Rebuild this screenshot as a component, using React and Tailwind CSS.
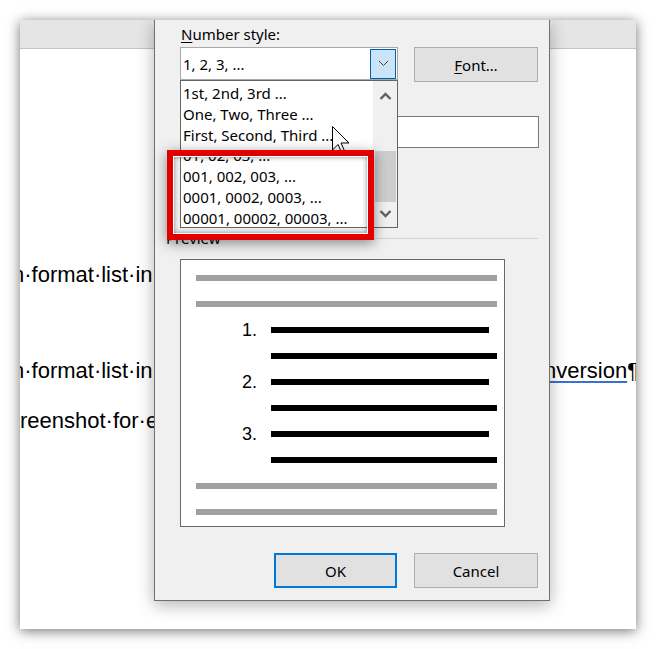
import React from 'react';

const listItems = [
  '1st, 2nd, 3rd ...',
  'One, Two, Three ...',
  'First, Second, Third ...',
  '01, 02, 03, ...',
  '001, 002, 003, ...',
  '0001, 0002, 0003, ...',
  '00001, 00002, 00003, ...',
];

const PreviewLine = ({ gray, short, num }) => (
  <div className="flex h-[6px] items-center">
    {gray ? (
      <div className="h-[6px] w-[301px] bg-[#a0a0a0]" />
    ) : (
      <>
        <div className="w-[75px] pr-[14px] text-right font-['Liberation_Sans',Arial,sans-serif] text-[18px] leading-none text-black">
          {num}
        </div>
        <div className={`h-[6px] bg-black ${short ? 'w-[218px]' : 'w-[226px]'}`} />
      </>
    )}
  </div>
);

const App = () => {
  return (
    <div className="h-[649px] w-[656px] overflow-hidden bg-white pl-[20px] pt-[20px]">
      {/* screenshot frame */}
      <div className="relative h-[609px] w-[616px] overflow-hidden bg-white shadow-[0_2px_12px_rgba(0,0,0,0.55)]">
        <div className="h-[29px] border-b border-[#c4c4c4] bg-[#e5e5e5]" />

        {/* document text */}
        <div className="flex flex-col whitespace-nowrap font-['Liberation_Sans',Arial,sans-serif] text-[22px] leading-[30px] text-black">
          <div className="ml-[-8px] mt-[211px]">n·format·list·in·Word·for·a·list·of·items</div>
          <div className="mt-[66px] flex justify-between">
            <span className="ml-[-8px]">n·format·list·in·Word·for·a·list</span>
            <span className="mr-[-3px]">
              <span className="underline decoration-[color:#3a6fd8] decoration-[length:1.5px] underline-offset-[3px]">conversion</span>¶
            </span>
          </div>
          <div className="ml-[-11px] mt-[20px]">creenshot·for·example·of·the·list</div>
        </div>

        {/* dialog */}
        <div className="absolute left-[134px] top-0 h-[581px] w-[396px] border-x border-b border-[#707070] bg-[#f0f0f0] pl-[25px] pt-[4px] font-['Noto_Sans','Open_Sans',sans-serif] text-[15px] text-black shadow-[0_4px_16px_rgba(0,0,0,0.3)]">
          <div className="ml-px leading-[20px]">
            <span className="underline underline-offset-2">N</span>umber style:
          </div>

          <div className="mt-[3px] flex items-start gap-[16px]">
            <div className="flex h-[33px] w-[218px] items-center justify-between border border-[#a8a8a8] bg-white pl-[2px] pr-px">
              <span className="leading-[20px]">1, 2, 3, ...</span>
              <div className="flex h-[30px] w-[26px] items-center justify-center border border-[#0060a8] bg-[#cce4f7]">
                <svg width="11" height="7" viewBox="0 0 11 7">
                  <polyline points="1,1 5.5,5.5 10,1" fill="none" stroke="#404040" strokeWidth="1" />
                </svg>
              </div>
            </div>
            <button className="flex h-[35px] w-[124px] items-center justify-center border border-[#adadad] bg-[#e1e1e1] leading-[20px]">
              <span className="underline underline-offset-2">F</span>ont…
            </button>
          </div>

          <div className="mt-[34px] h-[32px] w-[359px] border border-[#7a7a7a] bg-white" />

          <div className="ml-[-14px] mt-[80px] flex w-[372px] items-center gap-[4px] leading-[20px]">
            <span>Preview</span>
            <div className="flex-1 border-t border-[#d2d2d2]" />
          </div>

          <div className="mt-[11px] flex h-[268px] w-[325px] flex-col gap-[20px] border border-[#696969] bg-white pl-[15px] pt-[15px]">
            <PreviewLine gray />
            <PreviewLine gray />
            <PreviewLine num="1." short />
            <PreviewLine />
            <PreviewLine num="2." short />
            <PreviewLine />
            <PreviewLine num="3." short />
            <PreviewLine />
            <PreviewLine gray />
            <PreviewLine gray />
          </div>

          <div className="ml-[94px] mt-[26px] flex gap-[17px]">
            <button className="flex h-[35px] w-[123px] items-center justify-center border-2 border-[#0078d7] bg-[#e1e1e1] leading-[20px]">
              OK
            </button>
            <button className="flex h-[35px] w-[124px] items-center justify-center border border-[#adadad] bg-[#e1e1e1] leading-[20px]">
              Cancel
            </button>
          </div>

          {/* open dropdown list */}
          <div className="absolute left-[25px] top-[60px] h-[148px] w-[218px] overflow-hidden border border-[#646464] bg-white">
            <div className="pl-[2px] pt-[2px] leading-[20.8px] whitespace-nowrap">
              {listItems.map((t) => (
                <div key={t}>{t}</div>
              ))}
            </div>
            <div className="absolute bottom-0 right-0 top-0 w-[24px] bg-[#f0f0f0]">
              <div className="flex h-[30px] items-center justify-center">
                <svg width="13" height="8" viewBox="0 0 13 8">
                  <polyline points="1.5,7 6.5,2 11.5,7" fill="none" stroke="#606060" strokeWidth="2.4" />
                </svg>
              </div>
              <div className="ml-[2px] mt-[40px] h-[51px] w-[21px] bg-[#cdcdcd]" />
              <div className="absolute bottom-0 left-0 right-0 flex h-[26px] items-center justify-center">
                <svg width="13" height="8" viewBox="0 0 13 8">
                  <polyline points="1.5,1 6.5,6 11.5,1" fill="none" stroke="#606060" strokeWidth="2.4" />
                </svg>
              </div>
            </div>
          </div>

          {/* mouse cursor */}
          <svg className="absolute left-[177px] top-[106px]" width="19" height="30" viewBox="0 0 19 30">
            <polygon
              points="0.5,0.5 0.5,24 6,18.5 10.5,28.5 13.5,27 9,17 17,17"
              fill="#ffffff"
              stroke="#000000"
              strokeWidth="1"
              strokeLinejoin="miter"
            />
          </svg>

          {/* red highlight */}
          <div className="absolute left-[12px] top-[130px] h-[90px] w-[207px] border-[6px] border-[#e00000] shadow-[0_3px_12px_rgba(0,0,0,0.45)]">
            <div className="h-full w-full border border-white shadow-[inset_0_0_5px_rgba(0,0,0,0.45)]" />
          </div>
        </div>
      </div>
    </div>
  );
};

export default App;
